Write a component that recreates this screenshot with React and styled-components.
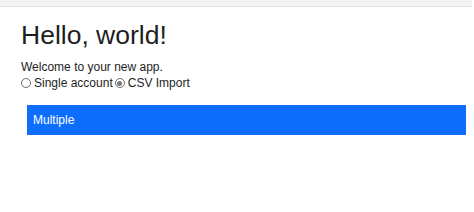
import React from "react";
import styled, { createGlobalStyle } from "styled-components";

const Global = createGlobalStyle`
  html, body { margin: 0; padding: 0; background: #ffffff; }
  body { font-family: "Liberation Sans", Arial, sans-serif; color: #1e1e1e; }
`;

const TopBar = styled.div`
  height: 6px;
  background: #f4f4f4;
  border-bottom: 1px solid #e2e2e2;
  margin-right: 2px;
`;

const Main = styled.main`
  padding: 12px 8px 0 21px;
`;

const Title = styled.h1`
  margin: 0;
  font-size: 26.5px;
  font-weight: 400;
  line-height: 32px;
`;

const Lead = styled.p`
  margin: 8px 0 0;
  font-size: 12px;
  line-height: 16px;
`;

const RadioRow = styled.div`
  display: flex;
  align-items: center;
  font-size: 12px;
  line-height: 16px;
`;

const RadioLabel = styled.label`
  display: inline-flex;
  align-items: center;
  gap: 3px;
  margin-right: 2px;
`;

const Radio = styled.input`
  appearance: none;
  -webkit-appearance: none;
  margin: 0;
  width: 10px;
  height: 10px;
  border: 1px solid #6e6e6e;
  border-radius: 50%;
  background: #ffffff;
  position: relative;
  flex: none;

  &:checked::after {
    content: "";
    position: absolute;
    inset: 1.5px;
    border-radius: 50%;
    background: #7a7a7a;
  }
`;

const Panel = styled.div`
  margin: 14px 0 0 6px;
  background: #0d6efd;
  color: #ffffff;
  height: 30px;
  display: flex;
  align-items: center;
  padding-left: 6px;
  font-size: 12px;
`;

export default function App() {
  return (
    <>
      <Global />
      <TopBar />
      <Main>
        <Title>Hello, world!</Title>
        <Lead>Welcome to your new app.</Lead>
        <RadioRow>
          <RadioLabel>
            <Radio type="radio" name="mode" />
            Single account
          </RadioLabel>
          <RadioLabel>
            <Radio type="radio" name="mode" defaultChecked />
            CSV Import
          </RadioLabel>
        </RadioRow>
        <Panel>Multiple</Panel>
      </Main>
    </>
  );
}
